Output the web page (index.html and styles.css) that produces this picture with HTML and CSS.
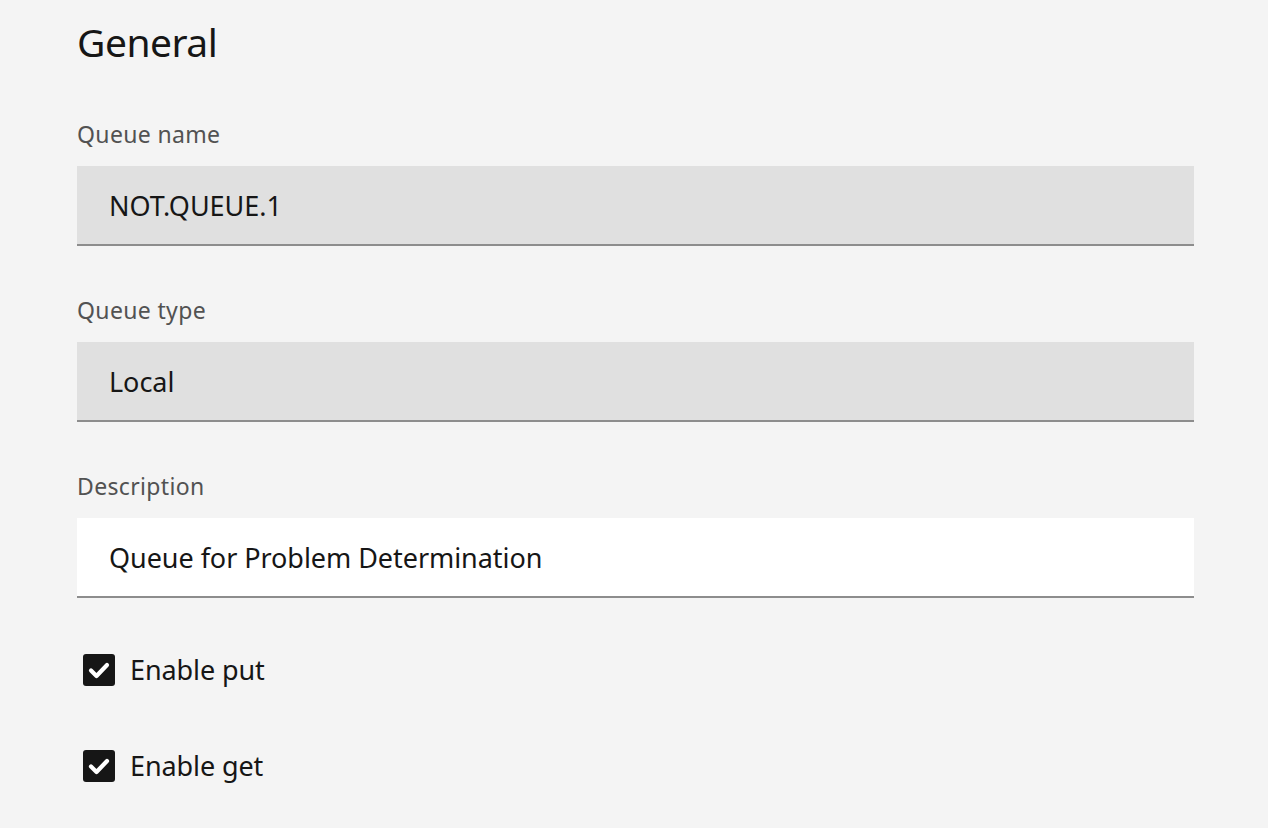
FILE: index.html
```html
<!DOCTYPE html>
<html lang="en">
<head>
<meta charset="utf-8">
<title>General</title>
<link rel="stylesheet" href="styles.css">
</head>
<body>
<main class="page">
  <h2 class="heading">General</h2>
  <div class="form-item">
    <label class="label" for="qname">Queue name</label>
    <input class="input input-readonly" id="qname" type="text" value="NOT.QUEUE.1" readonly>
  </div>
  <div class="form-item">
    <label class="label" for="qtype">Queue type</label>
    <input class="input input-readonly" id="qtype" type="text" value="Local" readonly>
  </div>
  <div class="form-item">
    <label class="label" for="qdesc">Description</label>
    <input class="input input-editable" id="qdesc" type="text" value="Queue for Problem Determination">
  </div>
  <div class="checkbox-row">
    <span class="checkbox">
      <svg viewBox="0 0 32 32" width="32" height="32" aria-hidden="true"><path d="M8 16.5 L13.5 22 L24 11" fill="none" stroke="#fff" stroke-width="4.2" stroke-linecap="round" stroke-linejoin="round"/></svg>
    </span>
    <span class="checkbox-label">Enable put</span>
  </div>
  <div class="checkbox-row">
    <span class="checkbox">
      <svg viewBox="0 0 32 32" width="32" height="32" aria-hidden="true"><path d="M8 16.5 L13.5 22 L24 11" fill="none" stroke="#fff" stroke-width="4.2" stroke-linecap="round" stroke-linejoin="round"/></svg>
    </span>
    <span class="checkbox-label">Enable get</span>
  </div>
</main>
</body>
</html>
```

FILE: styles.css
```css
html, body {
  margin: 0;
  padding: 0;
  background: #f4f4f4;
}

body {
  font-family: "Noto Sans", "Open Sans", "Liberation Sans", sans-serif;
  color: #161616;
}

.page {
  width: 1117px;
  padding: 16px 0 0 77px;
  display: flex;
  flex-direction: column;
}

.heading {
  margin: 0 0 50px 0;
  font-size: 39px;
  line-height: 52px;
  letter-spacing: -0.5px;
  font-weight: 400;
  color: #161616;
}

.form-item {
  display: flex;
  flex-direction: column;
  margin-bottom: 48px;
}

.label {
  font-size: 23px;
  line-height: 32px;
  letter-spacing: 0.35px;
  color: #525252;
  margin-bottom: 16px;
}

.input {
  box-sizing: border-box;
  height: 80px;
  width: 100%;
  border: none;
  border-bottom: 2px solid #8d8d8d;
  padding: 0 32px;
  font-family: inherit;
  font-size: 27px;
  letter-spacing: -0.05px;
  color: #161616;
  outline: none;
  margin: 0;
}

.input-readonly {
  background: #e0e0e0;
}

.input-editable {
  background: #ffffff;
}

.checkbox-row {
  display: flex;
  align-items: center;
  height: 48px;
  margin-bottom: 48px;
}

.checkbox {
  width: 32px;
  height: 32px;
  margin-left: 6px;
  border-radius: 3px;
  background: #161616;
  display: flex;
  align-items: center;
  justify-content: center;
}

.checkbox svg {
  display: block;
}

.checkbox-label {
  margin-left: 15px;
  font-size: 27px;
  line-height: 40px;
  letter-spacing: -0.1px;
  color: #161616;
}
```
